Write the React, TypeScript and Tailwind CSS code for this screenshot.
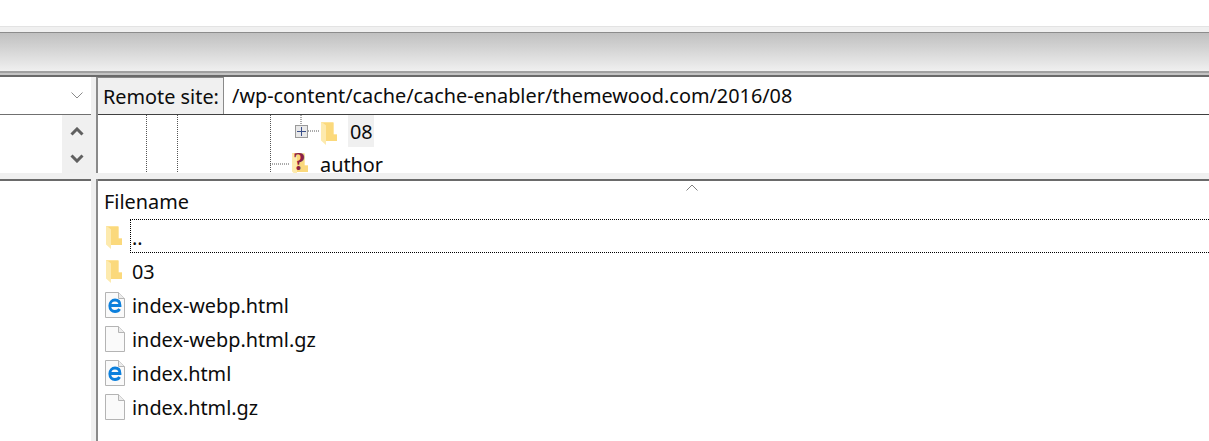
const files = [
  { name: "..", icon: "folder", focused: true },
  { name: "03", icon: "folder" },
  { name: "index-webp.html", icon: "html" },
  { name: "index-webp.html.gz", icon: "file" },
  { name: "index.html", icon: "html" },
  { name: "index.html.gz", icon: "file" },
]

function FolderIcon() {
  return (
    <svg width="17" height="24" viewBox="0 0 17 24">
      <path d="M1 1h12.500v12.500H17V20H5.500L1 18z" fill="#fde39a" />
      <path d="M13.500 2v11.500H17V20H6V4.500L3 2z" fill="#fbd97c" />
      <path d="M1 1l5 3.500V24l-5-4.500z" fill="#fdeaae" />
    </svg>
  )
}

function PageIcon({ children }: { children?: React.ReactNode }) {
  return (
    <svg width="20" height="26" viewBox="0 0 20 26">
      <path d="M.5.5h13l6 6v19H.5z" fill="#fafafa" stroke="#b4b4b4" />
      <path d="M13.500.5v6h6" fill="#ececec" stroke="#b4b4b4" />
      {children}
    </svg>
  )
}

function HtmlIcon() {
  return (
    <PageIcon>
      <path
        d="M5 13.500h10c0-3.800-2-5.500-5-5.500s-5.200 2.300-5.200 5.800 2.200 5.700 5.200 5.700c2 0 3.700-.8 4.600-2.500"
        fill="none"
        stroke="#0b7fdc"
        strokeWidth="2.800"
      />
    </PageIcon>
  )
}

function QuestionIcon() {
  return (
    <div className="relative w-[17px] h-[21px]">
      <div className="h-[21px] overflow-hidden">
        <FolderIcon />
      </div>
      <span className="absolute left-[2px] top-0 text-[25px] leading-[20px] font-bold text-[#8c2145] font-['Liberation_Serif',serif]">?</span>
    </div>
  )
}

function Chevron({ up, color, width }: { up?: boolean; color: string; width: number }) {
  return (
    <svg width="14" height="9" viewBox="0 0 14 9">
      <path d={up ? "M1.500 7.500L7 2l5.500 5.500" : "M1.500 1.500L7 7l5.500-5.500"} fill="none" stroke={color} strokeWidth={width} />
    </svg>
  )
}

export default function App() {
  return (
    <div className="w-[1209px] h-[441px] overflow-hidden bg-white text-[19.85px] text-[#0c0c0c] font-['Noto_Sans',sans-serif] flex flex-col">
      <div className="h-[26px] bg-white" />
      <div className="h-[6px] bg-[#f0f0f0] border-t border-[#e3e3e3]" />
      <div className="h-[39px] border-t border-[#8c8c8c] bg-gradient-to-b from-[#c0c0c0] to-[#f0f0f0]" />
      <div className="h-[2px] bg-[#a0a0a0]" />
      <div className="h-[2px] bg-[#c4c4c4]" />
      <div className="h-[2px] bg-[#6a6a6a]" />

      <div className="flex h-[96px]">
        <div className="w-[91px] flex flex-col">
          <div className="h-[38px] flex justify-end items-center pr-[7px] border-b border-[#707070]">
            <Chevron color="#8a8a8a" width={1} />
          </div>
          <div className="flex-1 flex justify-end">
            <div className="w-[29px] bg-[#f0f0f0] flex flex-col items-center pt-[12px] gap-[18px]">
              <Chevron up color="#606060" width={3} />
              <Chevron color="#606060" width={3} />
            </div>
          </div>
        </div>
        <div className="w-[7px] bg-[#f0f0f0] border-r-2 border-[#8a8a8a]" />
        <div className="flex-1 flex flex-col">
          <div className="h-[38px] flex border-b border-[#404040]">
            <div className="w-[126px] pl-[5px] pt-[1px] flex items-center bg-[#f0f0f0] border-r border-t border-[#8a8a8a]">Remote site:</div>
            <div className="pl-[8px] pt-[1px] flex items-center">/wp-content/cache/cache-enabler/themewood.com/2016/08</div>
          </div>
          <div className="relative flex-1">
            <svg width="400" height="58" className="absolute left-0 top-0">
              <g stroke="#555555" strokeDasharray="1 1" fill="none">
                <path d="M48.500 0v58M79.500 0v58M172.500 0v58M172 49h19M203 0v10M210 16h12" />
              </g>
            </svg>
            <div className="absolute left-[197px] top-[10px] w-[13px] h-[13px] bg-[#e8e8e8] border border-[#9a9a9a] flex items-center justify-center">
              <svg width="9" height="9" viewBox="0 0 9 9">
                <path d="M0 4.500h9M4.500 0v9" stroke="#3a4f8a" />
              </svg>
            </div>
            <div className="relative pl-[222px] pt-[4px] flex items-center gap-[11px] h-[32px]">
              <FolderIcon />
              <span className="bg-[#f0f0f0] px-[2px] h-[32px] leading-[34px] w-[26px] -mt-[4px]">08</span>
            </div>
            <div className="relative pl-[193px] flex items-start gap-[12px] h-[21px] mt-[5px]">
              <QuestionIcon />
              <span className="mt-[4px] leading-[17px]">author</span>
            </div>
          </div>
        </div>
      </div>

      <div className="h-[6px] bg-[#f0f0f0]" />
      <div className="flex flex-1">
        <div className="w-[91px] border-t-2 border-[#6a6a6a]" />
        <div className="w-[7px] bg-[#f0f0f0] border-r-2 border-[#8a8a8a]" />
        <div className="flex-1 flex flex-col border-t-2 border-[#6a6a6a]">
          <div className="relative h-[38px] pl-[6px] flex items-end pb-[2px]">
            <span>Filename</span>
            <div className="absolute left-[587px] top-[2px]">
              <Chevron up color="#808080" width={1} />
            </div>
          </div>
          {files.map((file) => (
            <div key={file.name} className="h-[34px] flex items-center pl-[7px] gap-[5px]">
              <div className="w-[20px] flex pt-[2px]">
                {file.icon === "folder" && <FolderIcon />}
                {file.icon === "html" && <HtmlIcon />}
                {file.icon === "file" && <PageIcon />}
              </div>
              <div className={"flex-1 h-[34px] flex items-center pl-[1px] pt-[3px] " + (file.focused ? "border border-dotted border-black border-r-0" : "border border-transparent")}>
                {file.name}
              </div>
            </div>
          ))}
        </div>
      </div>
    </div>
  )
}
